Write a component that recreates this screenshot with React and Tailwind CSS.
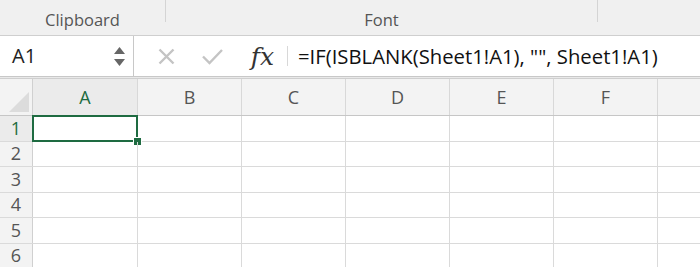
import React from "react";

const font = { fontFamily: '"Open Sans", "Liberation Sans", sans-serif' };

const cols = ["A", "B", "C", "D", "E", "F", ""];
const rows = [1, 2, 3, 4, 5, 6];

export default function App() {
  return (
    <div className="w-[700px] h-[267px] overflow-hidden bg-white text-[#333]" style={font}>
      {/* Ribbon */}
      <div className="h-[36px] bg-[#f0f0f0] border-b border-[#cfcfcf] flex">
        <div className="w-[165px] shrink-0 flex items-end justify-center pb-[2px] text-[16.5px] text-[#555]">Clipboard</div>
        <div className="w-px shrink-0 h-[22px] bg-[#d4d4d4]" />
        <div className="w-[431px] shrink-0 flex items-end justify-center pb-[2px] text-[16.5px] text-[#555]">
          <span>Font</span>
        </div>
        <div className="w-px shrink-0 h-[22px] bg-[#d4d4d4]" />
        <div className="flex-1" />
      </div>

      {/* Formula bar */}
      <div className="h-[41px] bg-white border-b border-[#c8c8c8] flex items-center">
        <div className="w-[134px] shrink-0 h-full border-r border-[#c8c8c8] flex items-center">
          <span className="ml-[12px] text-[20px] text-[#222] flex-1">A1</span>
          <div className="flex flex-col gap-[5px] mr-[8px] items-center">
            <svg width="11" height="7" viewBox="0 0 11 7"><path d="M5.5 0 L11 7 L0 7 Z" fill="#666" /></svg>
            <svg width="11" height="7" viewBox="0 0 11 7"><path d="M0 0 L11 0 L5.5 7 Z" fill="#666" /></svg>
          </div>
        </div>
        <div className="w-[41px] shrink-0 flex justify-end">
          <svg width="17" height="17" viewBox="0 0 17 17"><path d="M1.5 1.5 L15.5 15.5 M15.5 1.5 L1.5 15.5" stroke="#c4c4c4" strokeWidth="2.4" /></svg>
        </div>
        <div className="w-[48px] shrink-0 flex justify-end">
          <svg width="21" height="17" viewBox="0 0 21 17"><path d="M1 8.5 L7.5 15 L20 2" stroke="#c4c4c4" strokeWidth="2.4" fill="none" /></svg>
        </div>
        <div className="w-[51px] shrink-0 flex justify-end">
          <span className="text-[25px] italic text-[#333] leading-none" style={{ fontFamily: '"DejaVu Serif", "Liberation Serif", serif' }}>fx</span>
        </div>
        <div className="ml-[13px] w-px shrink-0 h-[20px] bg-[#d8d8d8]" />
        <span className="ml-[10px] text-[20.3px] text-[#111] whitespace-nowrap">=IF(ISBLANK(Sheet1!A1), "", Sheet1!A1)</span>
      </div>

      {/* gap */}
      <div className="h-[2px] bg-[#e9e9e9] border-b border-[#cfcfcf]" />

      {/* Column headers */}
      <div className="flex h-[37px] bg-[#f3f3f3] border-b border-[#c6c6c6]">
        <div className="w-[33px] shrink-0 border-r border-[#d0d0d0] relative">
          <svg className="absolute right-[3px] bottom-[3px]" width="20" height="20" viewBox="0 0 20 20"><path d="M20 0 L20 20 L0 20 Z" fill="#dcdcdc" /></svg>
        </div>
        {cols.map((c, i) => (
          <div
            key={i}
            className={`${i === 0 ? "w-[105px] text-[#1e6b41] bg-[#ebebeb]" : "w-[104px] text-[#555]"} shrink-0 border-r border-[#d8d8d8] flex items-center justify-center text-[18px]`}
          >
            {c}
          </div>
        ))}
      </div>

      {/* Rows */}
      {rows.map((r) => (
        <div key={r} className="flex h-[25.5px] border-b border-[#dadada]">
          <div className={`w-[33px] shrink-0 border-r border-[#d0d0d0] flex items-center justify-center text-[18px] ${r === 1 ? "bg-[#ebebeb] text-[#1e6b41]" : "bg-[#f3f3f3] text-[#555]"}`}>
            {r}
          </div>
          {cols.map((c, i) => (
            <div key={i} className={`${i === 0 ? "w-[105px]" : "w-[104px]"} shrink-0 border-r border-[#dadada] relative`}>
              {r === 1 && i === 0 && (
                <>
                  <div className="absolute left-[-1px] top-[-1px] right-[-1px] bottom-[-1px] border-2 border-[#1e6b41]" />
                  <div className="absolute right-[-5px] bottom-[-5px] w-[9px] h-[9px] bg-[#1e6b41] border border-white" />
                </>
              )}
            </div>
          ))}
        </div>
      ))}
    </div>
  );
}
